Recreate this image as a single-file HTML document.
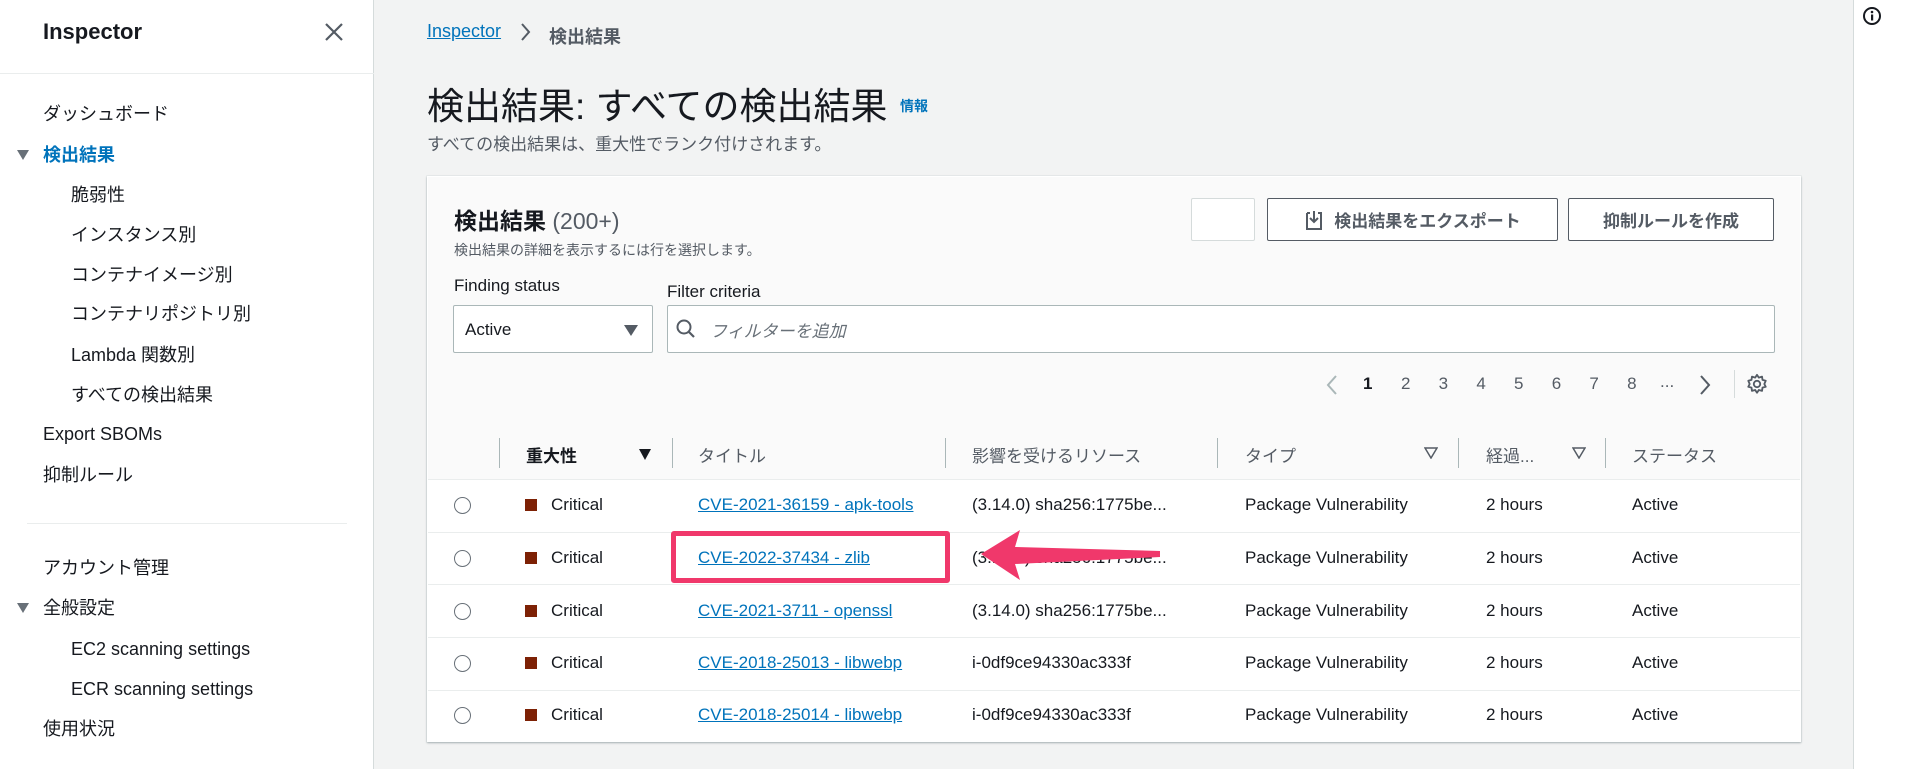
<!DOCTYPE html>
<html><head><meta charset="utf-8"><style>
*{box-sizing:border-box;margin:0;padding:0}
body{width:1908px;height:769px;overflow:hidden;background:#f2f3f3;font-family:"Liberation Sans","Noto Sans CJK JP",sans-serif;color:#16191f;position:relative}
.a{position:absolute;white-space:nowrap}
.side{position:absolute;left:0;top:0;width:374px;height:769px;background:#fff;border-right:1px solid #d5dbdb}
.nav{font-size:18px;color:#16191f;line-height:22px}
.link{color:#0073bb;text-decoration:underline}
.btn{position:absolute;height:43px;border:1px solid #545b64;border-radius:2px;background:#fff;font-weight:bold;font-size:17px;color:#545b64;display:flex;align-items:center;justify-content:center}
.th{font-size:17px;color:#545b64;top:442px}
.div{position:absolute;width:1px;height:30px;background:#aab7b8;top:438px}
.row{font-size:17px;line-height:22px}
.rad{position:absolute;left:454px;width:17px;height:17px;border:1.5px solid #687078;border-radius:50%}
.sq{position:absolute;left:525px;width:12px;height:12px;background:#7d2105}
.sep{position:absolute;left:428px;width:1372px;height:1px;background:#eaeded}
</style></head><body>
<div class="side">
<div class="a" style="left:43px;top:19px;font-size:22px;font-weight:bold">Inspector</div>
<svg class="a" style="left:324px;top:22px" width="20" height="20"><path d="M2 2L18 18M18 2L2 18" stroke="#545b64" stroke-width="2.2"/></svg>
<div class="a" style="left:0;top:73px;width:374px;height:1px;background:#eaeded"></div>
<div class="a nav" style="left:43px;top:103px">ダッシュボード</div>
<div class="a" style="left:17px;top:150px;width:0;height:0;border-left:6px solid transparent;border-right:6px solid transparent;border-top:10px solid #687078"></div>
<div class="a nav" style="left:43px;top:144px;color:#0073bb;font-weight:bold">検出結果</div>
<div class="a nav" style="left:71px;top:184px">脆弱性</div>
<div class="a nav" style="left:71px;top:224px">インスタンス別</div>
<div class="a nav" style="left:71px;top:264px">コンテナイメージ別</div>
<div class="a nav" style="left:71px;top:303px">コンテナリポジトリ別</div>
<div class="a nav" style="left:71px;top:344px">Lambda 関数別</div>
<div class="a nav" style="left:71px;top:384px">すべての検出結果</div>
<div class="a nav" style="left:43px;top:423px">Export SBOMs</div>
<div class="a nav" style="left:43px;top:464px">抑制ルール</div>
<div class="a" style="left:27px;top:523px;width:320px;height:1px;background:#eaeded"></div>
<div class="a nav" style="left:43px;top:557px">アカウント管理</div>
<div class="a" style="left:17px;top:603px;width:0;height:0;border-left:6px solid transparent;border-right:6px solid transparent;border-top:10px solid #687078"></div>
<div class="a nav" style="left:43px;top:597px">全般設定</div>
<div class="a nav" style="left:71px;top:638px">EC2 scanning settings</div>
<div class="a nav" style="left:71px;top:678px">ECR scanning settings</div>
<div class="a nav" style="left:43px;top:718px">使用状況</div>
</div>
<div class="a" style="left:1853px;top:0;width:55px;height:769px;background:#fff;border-left:1px solid #d5dbdb"></div>
<svg class="a" style="left:1862px;top:6px" width="20" height="20"><circle cx="10" cy="10" r="8" fill="none" stroke="#16191f" stroke-width="2"/><rect x="9" y="8.5" width="2.2" height="6" fill="#16191f"/><circle cx="10" cy="6" r="1.3" fill="#16191f"/></svg>

<div class="a link" style="left:427px;top:21px;font-size:18px">Inspector</div>
<svg class="a" style="left:520px;top:22px" width="12" height="20"><path d="M2 2L9 10L2 18" stroke="#545b64" stroke-width="2" fill="none"/></svg>
<div class="a" style="left:549px;top:23px;font-size:18px;color:#545b64;font-weight:bold">検出結果</div>
<div class="a" style="left:427px;top:76px;font-size:37px">検出結果: すべての検出結果</div>
<div class="a" style="left:900px;top:96px;font-size:14px;font-weight:bold;color:#0073bb">情報</div>
<div class="a" style="left:427px;top:130px;font-size:17px;color:#545b64">すべての検出結果は、重大性でランク付けされます。</div>

<div class="a" style="left:427px;top:176px;width:1374px;height:566px;background:#fff;box-shadow:0 1px 2px rgba(0,28,36,.3),0 0 0 1px #eaeded"></div>
<div class="a" style="left:428px;top:177px;width:1372px;height:249px;background:#fafafa"></div>
<div class="a" style="left:454px;top:202px;font-size:23px;font-weight:bold">検出結果 <span style="font-weight:normal;color:#545b64">(200+)</span></div>
<div class="a" style="left:454px;top:240px;font-size:14px;color:#545b64">検出結果の詳細を表示するには行を選択します。</div>
<div class="btn" style="left:1191px;top:198px;width:64px;border-color:#d5dbdb"></div>
<div class="btn" style="left:1267px;top:198px;width:291px"><svg width="20" height="22" style="margin-right:10px"><path d="M3 4V20H17V4H14M6 4H3M10 2V13M6 9L10 13L14 9" stroke="#545b64" stroke-width="2" fill="none"/></svg>検出結果をエクスポート</div>
<div class="btn" style="left:1568px;top:198px;width:206px">抑制ルールを作成</div>
<div class="a" style="left:454px;top:276px;font-size:17px">Finding status</div>
<div class="a" style="left:667px;top:282px;font-size:17px">Filter criteria</div>
<div class="a" style="left:453px;top:305px;width:200px;height:48px;background:#fff;border:1px solid #aab7b8;border-radius:2px"></div>
<div class="a" style="left:465px;top:320px;font-size:17px">Active</div>
<div class="a" style="left:624px;top:325px;width:0;height:0;border-left:7px solid transparent;border-right:7px solid transparent;border-top:11px solid #545b64"></div>
<div class="a" style="left:667px;top:305px;width:1108px;height:48px;background:#fff;border:1px solid #aab7b8;border-radius:2px"></div>
<svg class="a" style="left:675px;top:318px" width="22" height="22"><circle cx="9" cy="9" r="6.5" fill="none" stroke="#545b64" stroke-width="2"/><path d="M14 14L19 19" stroke="#545b64" stroke-width="2.2"/></svg>
<div class="a" style="left:710px;top:317px;font-size:17px;font-style:italic;color:#687078">フィルターを追加</div>
<svg class="a" style="left:1325px;top:374px" width="14" height="22"><path d="M11 2L3 11L11 20" stroke="#aab7b8" stroke-width="2" fill="none"/></svg>
<div class="a" style="left:1363px;top:374px;font-size:17px;font-weight:bold">1</div>
<div class="a" style="left:1401px;top:374px;font-size:17px;color:#545b64;word-spacing:23.5px">2 3 4 5 6 7 8</div>
<div class="a" style="left:1660px;top:372px;font-size:17px;color:#545b64">...</div>
<svg class="a" style="left:1698px;top:374px" width="14" height="22"><path d="M3 2L11 11L3 20" stroke="#545b64" stroke-width="2" fill="none"/></svg>
<div class="a" style="left:1734px;top:370px;width:1px;height:28px;background:#d5dbdb"></div>
<svg class="a" style="left:1746px;top:373px" width="22" height="22" viewBox="0 0 24 24"><path d="M12 2l2 3 3.5-1 .5 3.5 3.5 1-1.5 3.5 1.5 3-3.5 1-.5 3.5-3.5-1-2 3-2-3-3.5 1-.5-3.5-3.5-1 1.5-3-1.5-3.5 3.5-1 .5-3.5 3.5 1z" fill="none" stroke="#545b64" stroke-width="2" stroke-linejoin="round"/><circle cx="12" cy="12" r="3.5" fill="none" stroke="#545b64" stroke-width="2"/></svg>

<div class="a" style="left:428px;top:426px;width:1372px;height:54px;background:#fafafa;border-bottom:1px solid #eaeded"></div>
<div class="div" style="left:499px"></div>
<div class="a th" style="left:526px;color:#16191f;font-weight:bold">重大性</div>
<div class="a" style="left:639px;top:449px;width:0;height:0;border-left:6px solid transparent;border-right:6px solid transparent;border-top:11px solid #16191f"></div>
<div class="div" style="left:672px"></div>
<div class="a th" style="left:698px">タイトル</div>
<div class="div" style="left:945px"></div>
<div class="a th" style="left:972px">影響を受けるリソース</div>
<div class="div" style="left:1217px"></div>
<div class="a th" style="left:1245px">タイプ</div>
<svg class="a" style="left:1424px;top:447px" width="14" height="12"><path d="M1 1H13L7 11Z" fill="none" stroke="#545b64" stroke-width="1.5"/></svg>
<div class="div" style="left:1458px"></div>
<div class="a th" style="left:1486px">経過...</div>
<svg class="a" style="left:1572px;top:447px" width="14" height="12"><path d="M1 1H13L7 11Z" fill="none" stroke="#545b64" stroke-width="1.5"/></svg>
<div class="div" style="left:1605px"></div>
<div class="a th" style="left:1632px">ステータス</div>

<div class="sep" style="top:532px"></div><div class="sep" style="top:584px"></div><div class="sep" style="top:637px"></div><div class="sep" style="top:690px"></div>

<div class="rad" style="top:497px"></div><div class="sq" style="top:499px"></div>
<div class="a row" style="left:551px;top:494px">Critical</div>
<div class="a row link" style="left:698px;top:494px">CVE-2021-36159 - apk-tools</div>
<div class="a row" style="left:972px;top:494px">(3.14.0) sha256:1775be...</div>
<div class="a row" style="left:1245px;top:494px">Package Vulnerability</div>
<div class="a row" style="left:1486px;top:494px">2 hours</div>
<div class="a row" style="left:1632px;top:494px">Active</div>

<div class="rad" style="top:550px"></div><div class="sq" style="top:552px"></div>
<div class="a row" style="left:551px;top:547px">Critical</div>
<div class="a row link" style="left:698px;top:547px">CVE-2022-37434 - zlib</div>
<div class="a row" style="left:972px;top:547px">(3.14.0) sha256:1775be...</div>
<div class="a row" style="left:1245px;top:547px">Package Vulnerability</div>
<div class="a row" style="left:1486px;top:547px">2 hours</div>
<div class="a row" style="left:1632px;top:547px">Active</div>

<div class="rad" style="top:603px"></div><div class="sq" style="top:605px"></div>
<div class="a row" style="left:551px;top:600px">Critical</div>
<div class="a row link" style="left:698px;top:600px">CVE-2021-3711 - openssl</div>
<div class="a row" style="left:972px;top:600px">(3.14.0) sha256:1775be...</div>
<div class="a row" style="left:1245px;top:600px">Package Vulnerability</div>
<div class="a row" style="left:1486px;top:600px">2 hours</div>
<div class="a row" style="left:1632px;top:600px">Active</div>

<div class="rad" style="top:655px"></div><div class="sq" style="top:657px"></div>
<div class="a row" style="left:551px;top:652px">Critical</div>
<div class="a row link" style="left:698px;top:652px">CVE-2018-25013 - libwebp</div>
<div class="a row" style="left:972px;top:652px">i-0df9ce94330ac333f</div>
<div class="a row" style="left:1245px;top:652px">Package Vulnerability</div>
<div class="a row" style="left:1486px;top:652px">2 hours</div>
<div class="a row" style="left:1632px;top:652px">Active</div>

<div class="rad" style="top:707px"></div><div class="sq" style="top:709px"></div>
<div class="a row" style="left:551px;top:704px">Critical</div>
<div class="a row link" style="left:698px;top:704px">CVE-2018-25014 - libwebp</div>
<div class="a row" style="left:972px;top:704px">i-0df9ce94330ac333f</div>
<div class="a row" style="left:1245px;top:704px">Package Vulnerability</div>
<div class="a row" style="left:1486px;top:704px">2 hours</div>
<div class="a row" style="left:1632px;top:704px">Active</div>

<div class="a" style="left:671px;top:531px;width:279px;height:52px;border:5px solid #f0386b;border-radius:3px"></div>
<svg class="a" style="left:975px;top:525px" width="190" height="60"><path d="M6 29L45 5L40 22L185 26L185 32L40 39L45 55Z" fill="#f0386b"/></svg>
</body></html>
